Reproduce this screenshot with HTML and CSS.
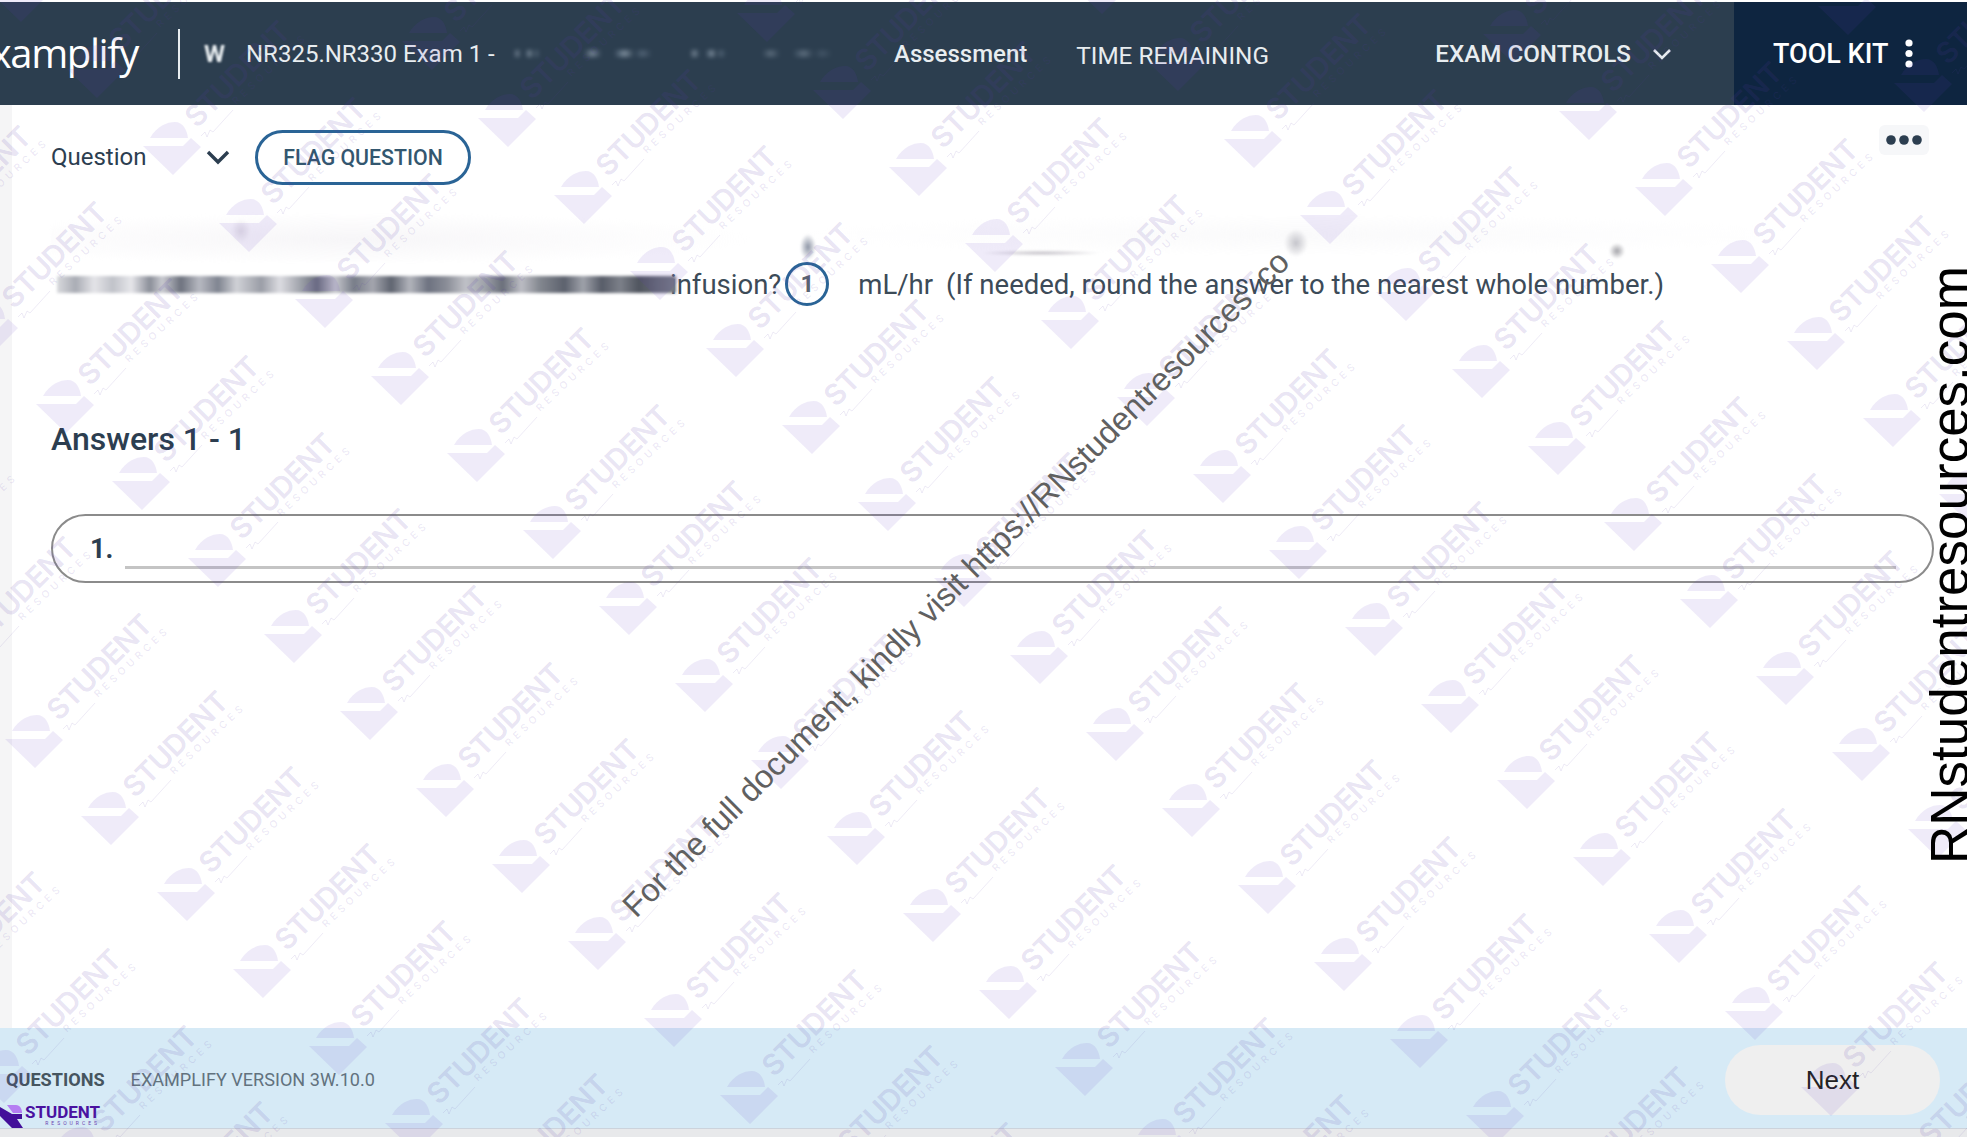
FILE: index.html
```html
<!DOCTYPE html>
<html lang="en">

<head>
  <meta charset="UTF-8">
  <title>Examplify - NR325.NR330 Exam 1</title>
  <link rel="stylesheet" href="styles.css">
</head>

<body>
<div class="page">
  <header class="topbar">
    <div class="logo-clip"><span class="logo">Examplify</span></div>
    <div class="divider"></div>
    <div class="exam-title">
      <span class="blur-letter">W</span>
      <span>NR325.NR330 Exam 1 -</span>
      <span class="smudge smudge-a"></span>
      <span class="smudge smudge-b"></span>
      <span class="smudge smudge-c"></span>
      <span class="smudge smudge-d"></span>
    </div>
    <span class="assessment">Assessment</span>
    <span class="time">TIME REMAINING</span>
    <div class="controls">
      <span>EXAM CONTROLS</span>
      <svg width="20" height="12" viewBox="0 0 20 12"><polyline points="2,2 10,10 18,2" fill="none" stroke="#e6ebef" stroke-width="2.6"/></svg>
    </div>
    <div class="toolkit">
      <span>TOOL KIT</span>
      <svg width="10" height="30" viewBox="0 0 10 30"><circle cx="5" cy="4" r="3.6" fill="#fff"/><circle cx="5" cy="14.5" r="3.6" fill="#fff"/><circle cx="5" cy="25" r="3.6" fill="#fff"/></svg>
    </div>
  </header>

  <main class="content">
    <div class="question-bar">
      <span class="question-label">Question</span>
      <svg class="question-chevron" width="24" height="15" viewBox="0 0 24 15"><polyline points="2,2 12,12 22,2" fill="none" stroke="#2c3e50" stroke-width="3.4"/></svg>
      <button class="flag">FLAG QUESTION</button>
      <div class="more">
        <svg width="40" height="12" viewBox="0 0 40 12"><circle cx="7" cy="6" r="4.8" fill="#2c3e50"/><circle cx="20" cy="6" r="4.8" fill="#2c3e50"/><circle cx="33" cy="6" r="4.8" fill="#2c3e50"/></svg>
      </div>
    </div>

    <div class="specks"></div>
    <div class="prompt">
      <span class="prompt-smudge"></span>
      <span>infusion?</span>
      <span class="step">1</span>
      <span class="unit">mL/hr</span>
      <span class="hint">(If needed, round the answer to the nearest whole number.)</span>
    </div>

    <h2 class="answers-title">Answers 1 - 1</h2>
    <div class="answer">
      <span class="answer-num">1.</span>
      <div class="answer-line"></div>
    </div>
  </main>

  <footer class="footer">
    <div class="footer-left">
      <div class="footer-text">
        <span class="questions">QUESTIONS</span>
        <span class="version">EXAMPLIFY VERSION 3W.10.0</span>
      </div>
      <div class="brand">
        <svg width="24" height="23" viewBox="0 0 24 23">
          <path d="M7,0 H16 C20,0 22,4 22,8 H13 Z" fill="#b57ef2"/>
          <path d="M0,2 L12,9 H22 V14 L17,14 L23,23 H12 L0,11 Z" fill="#43109a"/>
        </svg>
        <div class="brand-text">
          <span class="brand-name">STUDENT</span>
          <span class="brand-sub">RESOURCES</span>
        </div>
      </div>
    </div>
    <button class="next">Next</button>
  </footer>
  <div class="bottom-strip"></div>

  <svg class="watermark" width="1967" height="1137" viewBox="0 0 1967 1137">
    <defs>
      <g id="mark">
        <path class="wm-shape" d="M7,-8 C14,-20 24,-24 32,-24 C40,-24 44,-16 45,-8 Z"/>
        <path class="wm-shape" d="M0,0 L40,0 L48,-8 L58,1 L30,29 Z"/>
        <text class="wm-name" transform="translate(54,-17) rotate(-45)" textLength="135">STUDENT</text>
        <text class="wm-sub" transform="translate(93,-41) rotate(-43)" textLength="95">RESOURCES</text>
        <polyline class="wm-line" points="58,-10 62,-14 64,-9 67,-16 70,-14 90,-36"/>
      </g>
      <g id="col">
        <use href="#mark" x="-836" y="-844"/>
        <use href="#mark" x="-760" y="-767"/>
        <use href="#mark" x="-684" y="-690"/>
        <use href="#mark" x="-608" y="-614"/>
        <use href="#mark" x="-532" y="-537"/>
        <use href="#mark" x="-456" y="-460"/>
        <use href="#mark" x="-380" y="-384"/>
        <use href="#mark" x="-304" y="-307"/>
        <use href="#mark" x="-228" y="-230"/>
        <use href="#mark" x="-152" y="-153"/>
        <use href="#mark" x="-76" y="-77"/>
        <use href="#mark" x="0" y="0"/>
        <use href="#mark" x="76" y="77"/>
        <use href="#mark" x="152" y="153"/>
        <use href="#mark" x="228" y="230"/>
        <use href="#mark" x="304" y="307"/>
        <use href="#mark" x="380" y="384"/>
        <use href="#mark" x="456" y="460"/>
        <use href="#mark" x="532" y="537"/>
      </g>
    </defs>
    <use href="#col" x="-665" y="795"/>
    <use href="#col" x="-330" y="767"/>
    <use href="#col" x="5" y="739"/>
    <use href="#col" x="340" y="711"/>
    <use href="#col" x="675" y="683"/>
    <use href="#col" x="1010" y="655"/>
    <use href="#col" x="1345" y="627"/>
    <use href="#col" x="1680" y="599"/>
    <use href="#col" x="2015" y="571"/>
    <use href="#col" x="2350" y="543"/>
    <use href="#col" x="2685" y="515"/>
    <use href="#col" x="3020" y="487"/>
  </svg>

  <div class="diagonal-note">For the full document, kindly visit https://RNstudentresources .co</div>
  <div class="side-note">RNstudentresources.com</div>
</div>
</body>

</html>
```

FILE: styles.css
```css
html, body {
    margin: 0;
    padding: 0;
    background: #fff;
}

.page {
    position: relative;
    display: flex;
    flex-direction: column;
    width: 1967px;
    height: 1137px;
    overflow: hidden;
    font-family: Roboto, "Liberation Sans", sans-serif;
    color: #2c3e50;
}

/* top bar */
.topbar {
    display: flex;
    align-items: center;
    flex: none;
    height: 103px;
    margin-top: 2px;
    background-color: #2c3e4f;
    color: #e8edf0;
}

.logo-clip {
    width: 143px;
    overflow: hidden;
    white-space: nowrap;
}

.logo {
    display: block;
    margin-left: -30px;
    margin-top: -2px;
    font-family: "Open Sans", sans-serif;
    font-size: 40px;
    font-weight: 500;
    letter-spacing: -1.4px;
    color: #fff;
}

.divider {
    width: 2px;
    height: 50px;
    margin-left: 35px;
    background-color: #e8edf0;
}

.exam-title {
    display: flex;
    align-items: center;
    width: 690px;
    margin-left: 24px;
    font-size: 24px;
    white-space: nowrap;
}

.blur-letter {
    width: 42px;
    font-weight: 700;
    filter: blur(1.2px);
}

.smudge {
    height: 7px;
    background: linear-gradient(90deg, transparent 0, #8d9cab 12%, transparent 26%, transparent 44%, #647688 52%, #93a2b0 60%, transparent 74%, #5a6c7e 86%, transparent 100%);
    opacity: .75;
    filter: blur(2px);
}

.smudge-a { width: 26px; margin-left: 19px; }
.smudge-b { width: 68px; margin-left: 44px; }
.smudge-c { width: 36px; margin-left: 38px; }
.smudge-d { width: 70px; margin-left: 36px; opacity: .45; }

.assessment {
    font-size: 24px;
    font-weight: 500;
}

.time {
    margin-left: 49px;
    padding-top: 4px;
    font-size: 24.3px;
}

.controls {
    display: flex;
    align-items: center;
    gap: 21px;
    margin-left: auto;
    margin-right: 62px;
    font-size: 24.2px;
    font-weight: 500;
}

.toolkit {
    display: flex;
    align-items: center;
    gap: 16px;
    width: 194px;
    height: 100%;
    padding-left: 39px;
    background-color: #0e2540;
    color: #fff;
    font-size: 27px;
    font-weight: 500;
}

/* question area */
.content {
    flex: 1;
    min-height: 0;
    padding-left: 39px;
    border-left: 12px solid #f5f5f6;
}

.question-bar {
    position: relative;
    display: flex;
    align-items: center;
    height: 104px;
}

.question-label {
    width: 155px;
    font-size: 24px;
}

.flag {
    width: 216px;
    height: 55px;
    margin-left: 25px;
    background: #fff;
    border: 3px solid #2a6496;
    border-radius: 28px;
    font-family: inherit;
    font-size: 21.3px;
    font-weight: 500;
    color: #33576f;
}

.more {
    display: flex;
    align-items: center;
    justify-content: center;
    width: 50px;
    height: 30px;
    margin-left: auto;
    margin-right: 38px;
    margin-bottom: 34px;
    background-color: #f6f7f9;
    border-radius: 6px;
}

.specks {
    height: 53px;
    margin-right: 39px;
    background:
        radial-gradient(ellipse 8px 13px at 757px 38px, #8b93a4 0, transparent 100%),
        radial-gradient(ellipse 60px 3px at 990px 44px, #c5c2c9 0, transparent 100%),
        radial-gradient(ellipse 12px 14px at 1245px 34px, #c4c4ca 0, transparent 100%),
        radial-gradient(ellipse 8px 8px at 1566px 42px, #a3a3a8 0, transparent 100%),
        radial-gradient(ellipse 10px 12px at 190px 22px, #e2dfe5 0, transparent 100%),
        radial-gradient(ellipse 400px 26px at 300px 30px, #f7f6f8 0, transparent 100%),
        radial-gradient(ellipse 500px 20px at 1250px 26px, #fafafb 0, transparent 100%);
    filter: blur(1px);
}

.prompt {
    display: flex;
    align-items: center;
    height: 44px;
    font-size: 27.5px;
    color: #3c4b58;
    white-space: nowrap;
}

.prompt-smudge {
    width: 619px;
    height: 17px;
    margin-left: 6px;
    margin-right: -6px;
    background: linear-gradient(90deg,
        #d8d9dd 0, #a9acb4 3%, #e4e4e8 6%, #c0c2c9 9%, #e6e6ea 12%,
        #8a8e98 15%, #c9cad0 17%, #6d727e 20%, #b7b9c1 23%, #7f8490 26%,
        #d0d1d6 29%, #9a9da6 33%, #dcdce1 36%, #a5a8b0 39%, #6a6f7b 42%,
        #c3c4ca 45%, #777c88 48%, #a4a6ae 51%, #5f6470 54%, #b2b4bb 57%,
        #6d7280 60%, #8b8e98 63%, #c0c1c7 66%, #a0a3ab 69%, #6a6f7a 72%,
        #bcbdc4 75%, #83878f 78%, #5c616d 82%, #9fa2aa 85%, #575c68 88%,
        #7c8089 91%, #50555f 94%, #666b75 97%, #777b85 100%);
    filter: blur(1.8px);
}

.step {
    display: flex;
    align-items: center;
    justify-content: center;
    box-sizing: border-box;
    width: 44px;
    height: 44px;
    margin-left: 4px;
    border: 3px solid #2a6496;
    border-radius: 50%;
    font-size: 24px;
    font-weight: 700;
    color: #5a6470;
}

.unit {
    margin-left: 29px;
}

.hint {
    margin-left: 13px;
}

.answers-title {
    margin: 114px 0 0;
    height: 38px;
    font-size: 32px;
    line-height: 38px;
    font-weight: 500;
}

.answer {
    display: flex;
    align-items: flex-end;
    box-sizing: border-box;
    width: 1883px;
    height: 69px;
    margin-top: 56px;
    padding: 0 36px 12px 37px;
    border: 2px solid #8b8b8b;
    border-radius: 35px;
}

.answer-num {
    width: 35px;
    font-size: 27px;
    line-height: 40px;
    font-weight: 700;
}

.answer-line {
    flex: 1;
    height: 3px;
    background-color: #c4c4c4;
}

/* footer */
.footer {
    display: flex;
    justify-content: space-between;
    flex: none;
    height: 100px;
    background-color: #d6eaf6;
}

.footer-left {
    display: flex;
    flex-direction: column;
    justify-content: space-between;
    padding-top: 41px;
}

.footer-text {
    display: flex;
    gap: 26px;
    padding-left: 6px;
    font-size: 18.1px;
    line-height: 22px;
}

.questions {
    font-weight: 700;
    color: #46555f;
}

.version {
    color: #62727e;
}

.brand {
    display: flex;
    gap: 1px;
    height: 23px;
}

.brand-text {
    display: flex;
    flex-direction: column;
    width: 75px;
}

.brand-name {
    font-size: 17px;
    line-height: 15px;
    font-weight: 700;
    color: #4a12a0;
}

.brand-sub {
    font-size: 5px;
    line-height: 6px;
    letter-spacing: 3px;
    text-align: right;
    color: #6b3fb0;
}

.next {
    width: 215px;
    height: 70px;
    margin: 17px 27px 0 0;
    background-color: #efefef;
    border: none;
    border-radius: 35px;
    font-family: "Liberation Sans", sans-serif;
    font-size: 26px;
    color: #222;
}

.bottom-strip {
    flex: none;
    height: 9px;
    background-color: #e8e9eb;
    border-top: 1px solid #ccd3dc;
    box-sizing: border-box;
}

/* overlays */
.watermark {
    position: absolute;
    top: 0;
    left: 0;
    pointer-events: none;
}

.wm-shape {
    fill: rgba(98, 60, 200, .1);
}

.wm-name {
    font-family: Inter, sans-serif;
    font-size: 29px;
    font-weight: 600;
    fill: rgba(88, 60, 170, .15);
}

.wm-sub {
    font-family: Inter, sans-serif;
    font-size: 10px;
    font-weight: 500;
    fill: rgba(88, 60, 170, .12);
}

.wm-line {
    fill: none;
    stroke: rgba(88, 60, 170, .1);
    stroke-width: 1;
}

.diagonal-note {
    position: absolute;
    left: 640px;
    top: 923px;
    font-family: "Liberation Sans", sans-serif;
    font-size: 32.5px;
    line-height: 1;
    color: #606060;
    white-space: nowrap;
    transform-origin: 0 100%;
    transform: translateY(-32.5px) rotate(-45deg);
}

.side-note {
    position: absolute;
    left: 1967px;
    top: 864px;
    font-family: "Liberation Sans", sans-serif;
    font-size: 53px;
    line-height: 1;
    color: #000;
    white-space: nowrap;
    transform-origin: 0 0;
    transform: rotate(-90deg) translateY(-44px);
}
```
